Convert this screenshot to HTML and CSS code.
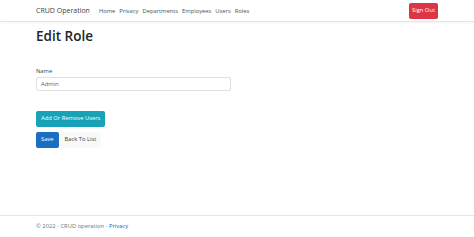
FILE: index.html
```html
<!DOCTYPE html>
<html lang="en">
<head>
  <meta charset="UTF-8">
  <title>Edit Role - CRUD Operation</title>
  <link rel="stylesheet" href="styles.css">
</head>
<body>

  <!-- Header -->
  <header class="navbar">
    <div class="container nav-inner">
      <a class="brand" href="#">CRUD Operation</a>
      <ul class="nav-links">
        <li><a href="#">Home</a></li>
        <li><a href="#">Privacy</a></li>
        <li><a href="#">Departments</a></li>
        <li><a href="#">Employees</a></li>
        <li><a href="#">Users</a></li>
        <li><a href="#">Roles</a></li>
      </ul>
      <button class="btn btn-danger">Sign Out</button>
    </div>
  </header>

  <!-- Main Content -->
  <main class="container main">
    <h1>Edit Role</h1>

    <form class="role-form">
      <div class="form-group">
        <label for="role-name">Name</label>
        <input type="text" id="role-name" class="form-control" value="Admin">
      </div>

      <div class="form-actions">
        <div><button type="button" class="btn btn-info">Add Or Remove Users</button></div>
        <div class="row-buttons">
          <button type="submit" class="btn btn-primary">Save</button>
          <a href="#" class="btn btn-light">Back To List</a>
        </div>
      </div>
    </form>
  </main>

  <!-- Footer -->
  <footer class="footer">
    <div class="container">
      &copy; 2022 - CRUD operation - <a href="#">Privacy</a>
    </div>
  </footer>

</body>
</html>
```

FILE: styles.css
```css
* {
  box-sizing: border-box;
  margin: 0;
  padding: 0;
}

body {
  font-family: 'Open Sans', 'Noto Sans', Arial, sans-serif;
  font-size: 5.8px;
  color: #3a3f44;
  background: #fff;
  min-height: 100vh;
  display: flex;
  flex-direction: column;
}

a {
  text-decoration: none;
}

.container {
  margin: 0 36px;
}

/* Header */
.navbar {
  height: 22px;
  background: #fff;
  border-bottom: 1px solid #e5e5e5;
  box-shadow: 0 1px 3px rgba(0, 0, 0, 0.05);
}

.nav-inner {
  height: 100%;
  display: flex;
  align-items: center;
}

.brand {
  font-size: 7px;
  color: #3a3f44;
  margin-right: 9px;
}

.nav-links {
  list-style: none;
  display: flex;
  gap: 4px;
  flex: 1;
}

.nav-links a {
  color: #4a5056;
}

.btn {
  display: inline-block;
  font-family: inherit;
  font-size: 5.8px;
  line-height: 1;
  padding: 4px 4px;
  border: 1px solid transparent;
  border-radius: 2px;
  cursor: pointer;
}

.btn-danger {
  background: #dc3545;
  color: #fff;
  padding: 4px 2px;
  margin-top: 1px;
}

/* Main */
.main {
  flex: 1;
}

h1 {
  font-size: 13.5px;
  font-weight: 600;
  color: #212529;
  margin-top: 6px;
  line-height: 1.2;
}

.role-form {
  margin-top: 23px;
}

label {
  display: block;
  margin-bottom: 2px;
}

.form-control {
  width: 195px;
  height: 14px;
  padding: 0 4px;
  font-family: inherit;
  font-size: 5.8px;
  color: #5a6066;
  border: 1px solid #dee2e6;
  border-radius: 2px;
}

.form-actions {
  margin-top: 20px;
  display: flex;
  flex-direction: column;
  gap: 5px;
}

.row-buttons {
  display: flex;
  gap: 1px;
}

.btn-info {
  background: #17a2b8;
  color: #fff;
}

.btn-primary {
  background: #1b6ec2;
  color: #fff;
}

.btn-light {
  background: #f8f9fa;
  color: #3a3f44;
}

/* Footer */
.footer {
  border-top: 1px solid #e5e5e5;
  height: 22px;
  line-height: 21px;
  color: #6c757d;
}

.footer a {
  color: #0366d6;
}
```
